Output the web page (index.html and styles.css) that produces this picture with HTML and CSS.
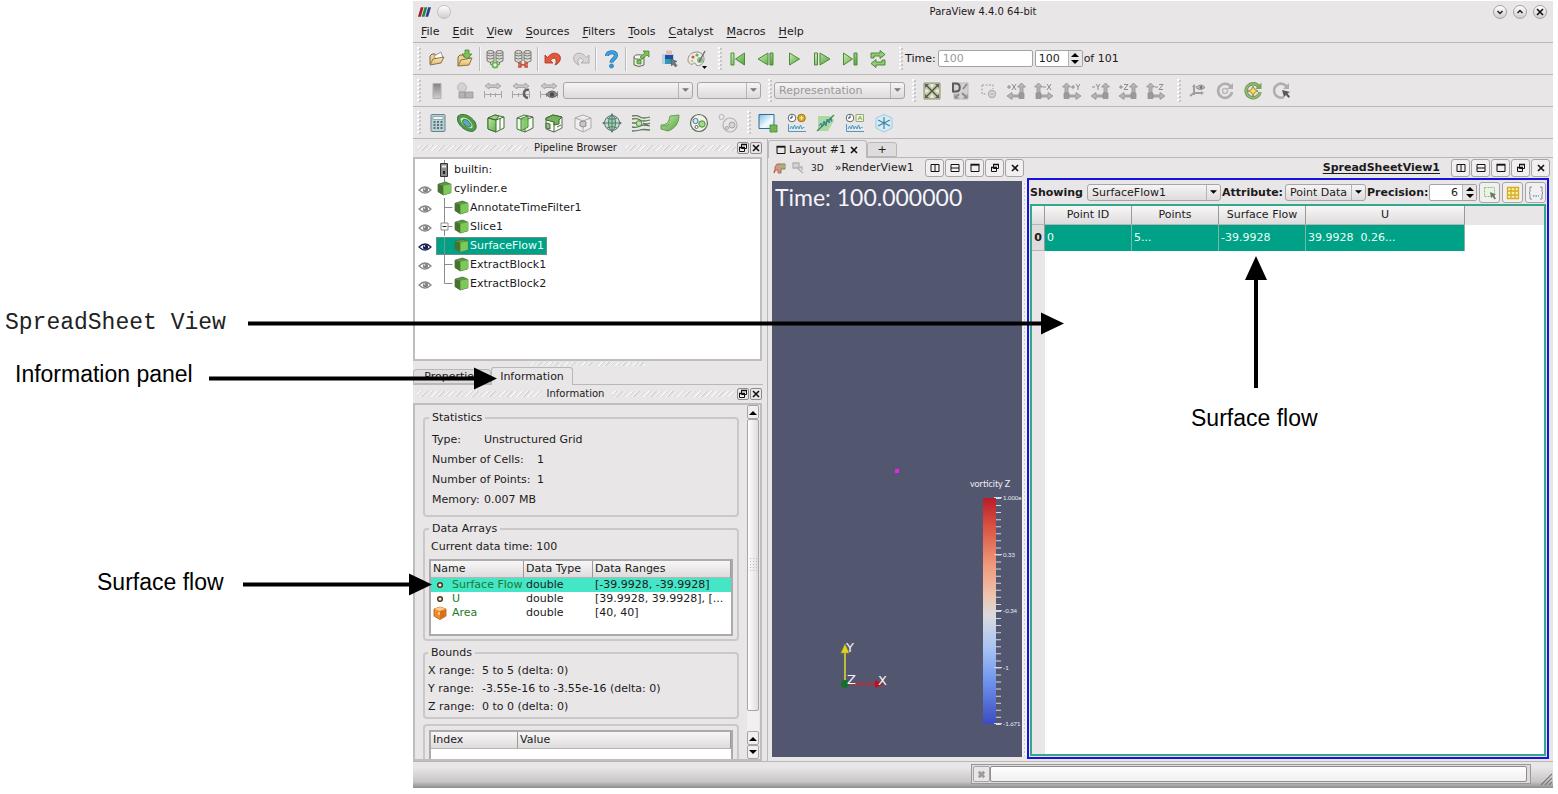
FILE: index.html
```html
<!DOCTYPE html>
<html lang="en">
<head>
<meta charset="utf-8">
<title>ParaView 4.4.0 64-bit</title>
<link rel="stylesheet" href="styles.css">
</head>
<body>
<svg class="defs" width="0" height="0" aria-hidden="true">
<defs>
<linearGradient id="gGreen" x1="0" y1="0" x2="1" y2="1"><stop offset="0" stop-color="#cdeeb4"/><stop offset="1" stop-color="#4fa53a"/></linearGradient>
<linearGradient id="gFold" x1="0" y1="0" x2="0" y2="1"><stop offset="0" stop-color="#fbe9bd"/><stop offset="1" stop-color="#e4b864"/></linearGradient>
<linearGradient id="gGray" x1="0" y1="0" x2="0" y2="1"><stop offset="0" stop-color="#858384"/><stop offset="1" stop-color="#cfcdce"/></linearGradient>
<linearGradient id="gBlue" x1="0" y1="0" x2="1" y2="1"><stop offset="0" stop-color="#7fc0e6"/><stop offset=".6" stop-color="#f2fafe"/><stop offset="1" stop-color="#b6dcf0"/></linearGradient>
<linearGradient id="gBar" x1="0" y1="0" x2="0" y2="1"><stop offset="0" stop-color="#b81c2c"/><stop offset=".12" stop-color="#d8503f"/><stop offset=".3" stop-color="#f09a7c"/><stop offset=".43" stop-color="#efc3ac"/><stop offset=".52" stop-color="#dadadd"/><stop offset=".66" stop-color="#a9c5f3"/><stop offset=".8" stop-color="#7397ee"/><stop offset="1" stop-color="#3b4cc0"/></linearGradient>
</defs>
<symbol id="open" viewBox="0 0 20 20"><path d="M3 15 3 7 5 5h3l1 2h6v3" fill="#efcf8c" stroke="#7d6a45"/><path d="M7 7l7-4 2 6-6 2z" fill="#fff" stroke="#999"/><path d="M3 16 6 10l11-2-3 6z" fill="url(#gFold)" stroke="#8a7347"/></symbol>
<symbol id="recent" viewBox="0 0 20 20"><path d="M3 17V8l2-2h3l1 2h6v3" fill="#efcf8c" stroke="#7d6a45"/><path d="M3 17 6 11l11-2-3 7z" fill="url(#gFold)" stroke="#8a7347"/><path d="M10 1h4v4h3l-5 5-5-5h3z" fill="#7cc258" stroke="#4c8235" stroke-width=".8"/></symbol>
<symbol id="servers" viewBox="0 0 20 20"><g fill="#d9dad3" stroke="#70716b" stroke-width=".9"><path d="M2 3v9q3 3 7 0V3zM11 3v9q3 3 7 0V3z"/><ellipse cx="5.500" cy="3" rx="3.500" ry="1.500"/><ellipse cx="14.500" cy="3" rx="3.500" ry="1.500"/><path d="M2 6q3 2 7 0M11 6q3 2 7 0M2 9q3 2 7 0M11 9q3 2 7 0" fill="none"/><path d="M5.500 13v2.500h9V13" fill="none"/></g></symbol>
<symbol id="connect" viewBox="0 0 20 20"><use href="#servers"/><circle cx="10" cy="16" r="2.600" fill="#e7f7de" stroke="#69b548" stroke-width="1.800"/></symbol>
<symbol id="disconnect" viewBox="0 0 20 20"><use href="#servers"/><path d="M5 14h3v4H5M15 14h-3v4h3M8 16h4" fill="#e5705c" stroke="#c05444" stroke-width="1.400"/></symbol>
<symbol id="undo" viewBox="0 0 20 20"><path d="M2 6v8h8L7.500 11.500C10 8 14 8 13 14l-1 2c6-2 7-9 3-11-4-2-8 0-10.500 3.500z" fill="#e5573a" stroke="#a3311c" stroke-width=".8"/></symbol>
<symbol id="redo" viewBox="0 0 20 20"><path d="M18 6v8h-8l2.500-2.500C10 8 6 8 7 14l1 2C2 14 1 7 5 5c4-2 8 0 10.500 3.500z" fill="#d6d4d5" stroke="#aaa8a9" stroke-width=".9"/></symbol>
<symbol id="help" viewBox="0 0 20 20"><path d="M6 7c0-5 9-5 9-.5 0 3-4.500 3.500-4.500 7" fill="none" stroke="#1e6ea8" stroke-width="4"/><path d="M6 7c0-5 9-5 9-.5 0 3-4.500 3.500-4.500 7" fill="none" stroke="#3fa0e2" stroke-width="2.600"/><circle cx="10.500" cy="17" r="2.100" fill="#3597db" stroke="#1e6ea8" stroke-width=".6"/></symbol>
<symbol id="export" viewBox="0 0 20 20"><path d="M3 8v8q5 3 10 0V8z" fill="#dfeed6" stroke="#5c6d55"/><ellipse cx="8" cy="8" rx="5" ry="2.200" fill="#f5faf2" stroke="#5c6d55"/><path d="M6 11v3.500l4 .5v-4z" fill="#7cc258" stroke="#4c8235" stroke-width=".7"/><path d="M9 8l5-4-2-2h6v6l-2-2-5 4z" fill="#7cc258" stroke="#3f7a29" stroke-width=".7"/></symbol>
<symbol id="cursorbox" viewBox="0 0 20 20"><path d="M7 1.500h6V6H7z" fill="#e7b9b0"/><path d="M3 5h12v10H3z" fill="#b9cfe4"/><path d="M6 6h8v4H6z" fill="#1f4f9c"/><path d="M6 10h8v5H6z" fill="#2f9ab0"/><path d="M12 10l6 2.500-2.500 1 2.500 3-1.500 1.500-2.500-3-1.500 2z" fill="#70787f" stroke="#4b5257" stroke-width=".6"/></symbol>
<symbol id="palette" viewBox="0 0 20 20"><path d="M10 3c-6 0-9 4-9 8 0 3 3 5 5 4 1-2 3-1 3 1 3 2 8-1 8-6 0-4-3-7-7-7z" fill="#eceeea" stroke="#8b908a"/><circle cx="6" cy="8" r="1.600" fill="#d9534a"/><circle cx="10" cy="6" r="1.600" fill="#6bb04a"/><circle cx="5" cy="12" r="1.300" fill="#e6bd4e"/><circle cx="13" cy="11" r="3" fill="#8bb98d"/><path d="M18 2l-6 11" stroke="#7a6e5f" stroke-width="1.500"/><path d="M15 17h5l-2.500 3z" fill="#000"/></symbol>
<symbol id="first" viewBox="0 0 20 20"><g fill="url(#gGreen)" stroke="#4f8a3c"><path d="M3 4h3v12H3zM16.500 4v12L7.500 10z"/></g></symbol>
<symbol id="prev" viewBox="0 0 20 20"><g fill="url(#gGreen)" stroke="#4f8a3c"><path d="M14 4h3v12h-3zM12 4v12L2 10z"/></g></symbol>
<symbol id="play" viewBox="0 0 20 20"><path d="M5.500 4v12l10-6z" fill="url(#gGreen)" stroke="#4f8a3c"/></symbol>
<symbol id="next" viewBox="0 0 20 20"><g fill="url(#gGreen)" stroke="#4f8a3c"><path d="M2.500 4h3v12h-3zM8 4v12l10-6z"/></g></symbol>
<symbol id="last" viewBox="0 0 20 20"><g fill="url(#gGreen)" stroke="#4f8a3c"><path d="M14 4h3v12h-3zM3.500 4v12l9-6z"/></g></symbol>
<symbol id="loop" viewBox="0 0 20 20"><g fill="#8ad06c" stroke="#4f7a40" stroke-width=".9"><path d="M3 9V4h9V1.500l5 4L12 9.500V7H6v2zM17 11v5H8v2.500l-5-4 5-4V13h6v-2z"/></g></symbol>
<symbol id="legendbar" viewBox="0 0 20 20"><path d="M6 2.500h8v15H6z" fill="url(#gGray)" stroke="#b3b1b2"/></symbol>
<symbol id="editcolor" viewBox="0 0 20 20"><circle cx="7" cy="6.500" r="4.500" fill="#d3d1d2" stroke="#b9b7b8"/><path d="M4 11h6v6H4zM10 11h8v6h-8z" fill="#b5b3b4" stroke="#9a9899" stroke-width=".8"/></symbol>
<symbol id="rescale" viewBox="0 0 20 20"><g fill="none" stroke="#a8a6a7"><path d="M1 13.500h18M1.500 10v7M18.500 10v7M7.500 12v4M12.500 12v4"/><path d="M2 5l4-3v2h8V2l4 3-4 3V6.500H6V8z" fill="#cbc9ca"/></g></symbol>
<symbol id="rescalec" viewBox="0 0 20 20"><use href="#rescale"/><path d="M18 9c-6-2-7 7-1 8" fill="none" stroke="#636162" stroke-width="2.600"/></symbol>
<symbol id="rescalev" viewBox="0 0 20 20"><use href="#rescale"/><path d="M7 13.500q6-7 12 0-6 6-12 0z" fill="#8d8b8c" stroke="#636162"/><circle cx="13" cy="13.500" r="2.200" fill="#4e4c4d"/></symbol>
<symbol id="zoomall" viewBox="0 0 20 20"><path d="M2 2h16v16H2z" fill="#c3caae" stroke="#8d9078"/><path d="M4 4l12 12M16 4L4 16" stroke="#4c523c" stroke-width="1.400"/><path d="M3 3h4L3 7zM17 3v4l-4-4zM3 17v-4l4 4zM17 17h-4l4-4z" fill="#5c634a"/><path d="M8 3.500l2 3.500 2-3.500zM8 16.500L10 13l2 3.500zM3.500 8L7 10l-3.500 2zM16.500 8L13 10l3.500 2z" fill="#f2f5e6"/></symbol>
<symbol id="zoomdata" viewBox="0 0 20 20"><path d="M4 2h14v16H4z" fill="#d3d1d2" stroke="#bbb9ba"/><path d="M5 17l4-4M17 17l-5-5M17 3l-4 5" stroke="#8b898a" stroke-width="1.800"/><path d="M5 13v4h4M17 13v4h-4" fill="none" stroke="#8b898a"/><path d="M3 2.500v8h3c5 0 5-8 0-8z" fill="#d6d4d5" stroke="#5d5b5c" stroke-width="2"/></symbol>
<symbol id="zoombox" viewBox="0 0 20 20"><path d="M4 4h11v4M4 4v9h5" fill="none" stroke="#b5b3b4" stroke-width="1.400" stroke-dasharray="2 1.500"/><circle cx="14" cy="13" r="3.500" fill="#d9d7d8" stroke="#b5b3b4" stroke-width="1.400"/><path d="M12.500 13h3" stroke="#a5a3a4"/></symbol>
<symbol id="axL" viewBox="0 0 20 20"><g fill="#b6b4b5" stroke="#929091" stroke-width=".8"><path d="M14 12V6h-2.500L15.500 2l4 4H17v6z"/><path d="M13 12h5v5.500h-5z" fill="#9c9a9b"/><path d="M13 14H6v-2.500L1 15l5 3.500V16h7z"/></g></symbol>
<symbol id="axR" viewBox="0 0 20 20"><g fill="#b6b4b5" stroke="#929091" stroke-width=".8"><path d="M3 12V6H.5L4.500 2l4 4H6v6z"/><path d="M2 12h5v5.500H2z" fill="#9c9a9b"/><path d="M7 14h7v-2.500l5 3.500-5 3.500V16H7z"/></g></symbol>
<symbol id="sgX" viewBox="0 0 6 6"><path d="M1 0l4 6M5 0L1 6" stroke="#8d8b8c"/></symbol>
<symbol id="sgY" viewBox="0 0 6 6"><path d="M1 0l2 3 2-3M3 3v3" stroke="#8d8b8c" fill="none"/></symbol>
<symbol id="sgZ" viewBox="0 0 6 6"><path d="M1 .5h4L1 5.500h4" stroke="#8d8b8c" fill="none"/></symbol>
<symbol id="px" viewBox="0 0 20 20"><use href="#axL"/><use href="#sgX" x="5" y="3" width="6" height="6"/><path d="M1 6h4M3 4v4" stroke="#8d8b8c"/></symbol>
<symbol id="mx" viewBox="0 0 20 20"><use href="#axR"/><use href="#sgX" x="12" y="3" width="6" height="6"/><path d="M9 6h3" stroke="#8d8b8c"/></symbol>
<symbol id="py" viewBox="0 0 20 20"><use href="#axR"/><use href="#sgY" x="13" y="3" width="6" height="6"/><path d="M9 6h4M11 4v4" stroke="#8d8b8c"/></symbol>
<symbol id="my" viewBox="0 0 20 20"><use href="#axL"/><use href="#sgY" x="5" y="3" width="6" height="6"/><path d="M2 6h3" stroke="#8d8b8c"/></symbol>
<symbol id="pz" viewBox="0 0 20 20"><use href="#axL"/><use href="#sgZ" x="5" y="3" width="6" height="6"/><path d="M1 6h4M3 4v4" stroke="#8d8b8c"/></symbol>
<symbol id="mz" viewBox="0 0 20 20"><use href="#axR"/><use href="#sgZ" x="12" y="3" width="6" height="6"/><path d="M9 6h3" stroke="#8d8b8c"/></symbol>
<symbol id="showaxes" viewBox="0 0 20 20"><path d="M7 14V5M7 12h8M7 12l-4 3" stroke="#a09e9f" stroke-width="2" fill="none"/><path d="M7 3l-2 3h4zM17 12l-3-2v4z" fill="#a09e9f"/><path d="M9 6.500q5-5 9 0-5 4-9 0z" fill="#c3c1c2" stroke="#8d8b8c"/><circle cx="14" cy="6.500" r="1.400" fill="#777"/></symbol>
<symbol id="center" viewBox="0 0 20 20"><path d="M16 6a7 7 0 1 0 1 5" fill="none" stroke="#b0aeaf" stroke-width="2.600"/><path d="M18 2v6h-6z" fill="#b0aeaf"/><circle cx="10" cy="10" r="2.500" fill="none" stroke="#bbb9ba" stroke-width="1.500"/></symbol>
<symbol id="resetcenter" viewBox="0 0 20 20"><path d="M16 6a7 7 0 1 0 1 5" fill="none" stroke="#6e9656" stroke-width="3.400"/><path d="M16 6a7 7 0 1 0 1 5" fill="none" stroke="#95ba76" stroke-width="1.600"/><path d="M18.500 1.500V8H12z" fill="#7da362"/><path d="M10 5l1.500 3.500L15 10l-3.500 1.500L10 15l-1.500-3.500L5 10l3.500-1.500z" fill="#f6e04e" stroke="#8a7433" stroke-width=".8"/></symbol>
<symbol id="pickcenter" viewBox="0 0 20 20"><path d="M16 6a7 7 0 1 0-3 10" fill="none" stroke="#b0aeaf" stroke-width="2.600"/><path d="M18 2v6h-6z" fill="#b0aeaf"/><path d="M11 9l8 2-2.500 1.500 2.500 3-1.500 1.500-2.500-3-2 2z" fill="#595758"/></symbol>
<symbol id="calc" viewBox="0 0 20 20"><rect x="3" y="1.500" width="14" height="17" rx="1" fill="#bcd0d3" stroke="#66858c"/><path d="M5 3.500h10v3H5z" fill="#eef7f7" stroke="#66858c" stroke-width=".6"/><path d="M5.500 9h9M5.500 12h9M5.500 15h9" stroke="#55757d" stroke-width="2" stroke-dasharray="2 1.500"/></symbol>
<symbol id="contour" viewBox="0 0 20 20"><path d="M1 3c5-4 13 0 17 6 3 6 0 11-6 9C6 17-2 9 1 3z" fill="#4d9b4c" stroke="#3f7042"/><path d="M4 5c4-2 9 2 11 6 2 5-1 5-5 3-4-2-8-7-6-9z" fill="#c6e6a5"/><path d="M6 7c3-2 7 2 8 5 0 3-4 2-6 0S5 9 6 7z" fill="#5fa7c0" stroke="#35764c"/></symbol>
<symbol id="clip" viewBox="0 0 20 20"><path d="M2 5l7-3 9 2v11l-8 4-8-3z" fill="#fafff6" stroke="#3f6f36"/><path d="M2 5l8 2v12l-8-3zM2 5l7-3 4 1-3 4z" fill="url(#gGreen)" stroke="#3f6f36"/><path d="M10 7l8-3M14 5.500v11" fill="none" stroke="#3f6f36"/></symbol>
<symbol id="slice" viewBox="0 0 20 20"><path d="M2 5l7-3 9 2v11l-8 4-8-3z" fill="#f1f9ec" stroke="#4b6a45"/><path d="M2 5l8 2v12M10 7l8-3" fill="none" stroke="#4b6a45"/><path d="M6 5.500l7-2.500v11l-7 4z" fill="#7fc765" fill-opacity=".85" stroke="#3f8c2d"/></symbol>
<symbol id="threshold" viewBox="0 0 20 20"><path d="M2 5l7-3 9 2v11l-8 4-8-3z" fill="#f7faf5" stroke="#5a6a56"/><path d="M2 5l7-3 9 2-3 3v4l-5 1v-3l-8-2z" fill="#74b45d" stroke="#41692f"/><path d="M2 10l4 1v5l-4-1zM10 9v10M13 14l4-2" fill="#8bc576" stroke="#4b6a45"/></symbol>
<symbol id="extract" viewBox="0 0 20 20"><path d="M2 5l8-3 8 3v10l-8 4-8-4zM2 5l8 3 8-3M10 8v11" fill="#f0eeef" stroke="#aaa8a9"/><path d="M7 9l4-1 2 1v4l-3 1-3-1z" fill="#c8c6c7" stroke="#8f8d8e"/></symbol>
<symbol id="glyph" viewBox="0 0 20 20"><circle cx="10" cy="10" r="7.500" fill="#c9d9d3" stroke="#547a78"/><ellipse cx="10" cy="10" rx="3.500" ry="7.500" fill="#9ed39b" stroke="#547a78"/><path d="M10 1v18M1 10h18M5 5q5 3 10 0M5 15q5-3 10 0" fill="none" stroke="#547a78"/><path d="M10 0L8.500 2.500h3zM10 20l-1.500-2.500h3zM0 10l2.500-1.500v3zM20 10l-2.500-1.500v3z" fill="#547a78"/></symbol>
<symbol id="stream" viewBox="0 0 20 20"><g fill="none" stroke="#5b7a58" stroke-width="1.300"><path d="M1 3q5-1 8 1t10 0M1 6q5-1 8 1t10 0M1 14q5 1 8-1t10 0M1 18q5 0 8-1t10 0M1 10h5M12 10q4 2 7 0"/></g><circle cx="8" cy="10.500" r="2.800" fill="#b8e49c" stroke="#4f8a3c"/></symbol>
<symbol id="warp" viewBox="0 0 20 20"><path d="M1 12c6 0 8-3 9-9l9-1c0 9-5 14-11 16l-7-2z" fill="url(#gGreen)" stroke="#5f9150" stroke-width=".9"/><path d="M1 13q7 1 8-2" fill="none" stroke="#6fa45b"/></symbol>
<symbol id="group" viewBox="0 0 20 20"><circle cx="10" cy="10" r="8.500" fill="#eef4ea" stroke="#5d6b59" stroke-width="1.200"/><circle cx="6.500" cy="8" r="2.600" fill="#d3e6f2" stroke="#4b7590"/><circle cx="13" cy="11" r="3.200" fill="#a2da86" stroke="#4f8a3c"/><circle cx="7.500" cy="14" r="1.500" fill="#fff" stroke="#5d6b59"/></symbol>
<symbol id="level" viewBox="0 0 20 20"><circle cx="12" cy="12" r="7" fill="none" stroke="#b3b1b2" stroke-width="1.200"/><circle cx="3.500" cy="4" r="2.500" fill="none" stroke="#b3b1b2"/><circle cx="14" cy="12" r="3" fill="#d5d3d4" stroke="#a5a3a4"/><circle cx="9" cy="15" r="1.500" fill="none" stroke="#a5a3a4"/></symbol>
<symbol id="selregion" viewBox="0 0 20 20"><path d="M1 1.500h15v14H1z" fill="url(#gBlue)" stroke="#2b6d94"/><path d="M12 12h7v7h-7z" fill="#6eb854" stroke="#4a8837" stroke-width=".8"/></symbol>
<symbol id="wave" viewBox="0 0 20 20"><path d="M1.500 11v7.500H19M3 16l1.500-3 1.500 3 1.500-4L9 16l1.500-3 1.500 3 1.500-4 1.500 4 1.500-2 1 1" fill="none" stroke="#4c9ac4"/></symbol>
<symbol id="plottime" viewBox="0 0 20 20"><use href="#wave"/><circle cx="5" cy="5" r="3.800" fill="#fff" stroke="#5b686c"/><path d="M5 2.500V5H3" stroke="#333" fill="none"/><circle cx="14.500" cy="5" r="3.800" fill="#dca92d" stroke="#9a741b"/><path d="M12.500 5h4M14.500 3v4" stroke="#fae9a5"/></symbol>
<symbol id="plotline" viewBox="0 0 20 20"><path d="M2 3h12l4 4-6 11H2z" fill="#a9dba0"/><path d="M1 18L18 2" stroke="#548a52" stroke-width="1.500"/><path d="M3 13l2-3 1 4 2-6 2 5 1-7 2 4 2-5 1 4" fill="none" stroke="#35819b"/></symbol>
<symbol id="plotsel" viewBox="0 0 20 20"><use href="#wave"/><circle cx="5" cy="5" r="3.800" fill="#fff" stroke="#5b686c"/><path d="M5 2.500V5H3" stroke="#333" fill="none"/><path d="M11 1.500h7.500v7H11z" fill="#eaf4d8" stroke="#9aa87e"/><path d="M13 7l2-4 2 4M14 5.500h2" stroke="#8db65d" fill="none"/></symbol>
<symbol id="freeze" viewBox="0 0 20 20"><path d="M2 5l8-3.500L18 5v10l-8 4-8-4z" fill="#d5ebf7" stroke="#9bcbe4"/><path d="M10 4v12M4 7l12 6M16 7L4 13" stroke="#47829b" stroke-width="1.200"/></symbol>
<symbol id="cube" viewBox="0 0 14 14"><path d="M1 3l7-2 5 2v8l-7 2-5-3z" fill="#5a9a42" stroke="#4b6b41" stroke-width=".8"/><path d="M1 3l5 1.500V13l-5-3z" fill="#48722f"/><path d="M6 4.500L13 3v8l-7 2z" fill="#7cc95a"/></symbol>
<symbol id="boxicon" viewBox="0 0 14 14"><path d="M1 3l6-2 6 2v7l-6 3.500L1 10z" fill="#f08a28" stroke="#b35c12" stroke-width=".8"/><path d="M1 3l6 2 6-2-6-2z" fill="#ffc98a"/><path d="M7 5v8l5.500-3V3.500z" fill="#dd6f15"/><path d="M6 6v3" stroke="#fff"/></symbol>
<symbol id="eye" viewBox="0 0 14 10"><path d="M1 5q6-6 12 0-6 6-12 0z" fill="#fff" stroke="currentColor" stroke-width="1.200"/><circle cx="7.500" cy="5" r="2.600" fill="currentColor"/><circle cx="6.500" cy="4" r=".8" fill="#fff"/></symbol>
<symbol id="host" viewBox="0 0 8 14"><path d="M.5.500h7v13h-7z" fill="#8b8b8b" stroke="#333"/><path d="M2 2.500h4v2H2z" fill="#eee"/><path d="M4 8v3" stroke="#222" stroke-width="2"/></symbol>
<symbol id="dot" viewBox="0 0 14 14"><circle cx="7" cy="7" r="2.300" fill="#fbeee0" stroke="#4a3316" stroke-width="1.500"/></symbol>
<symbol id="spH" viewBox="0 0 10 10"><path d="M1 1.500h8v7H1zM5 1.500v7" fill="none" stroke="#111"/></symbol>
<symbol id="spV" viewBox="0 0 10 10"><path d="M1 1.500h8v7H1zM1 5h8" fill="none" stroke="#111"/></symbol>
<symbol id="max" viewBox="0 0 10 10"><path d="M1 2h8v6.500H1z" fill="none" stroke="#111"/><path d="M.5 1.500h9" stroke="#111" stroke-width="1.500"/></symbol>
<symbol id="restore" viewBox="0 0 10 10"><path d="M3.500 1.500h5v4h-5zM1.500 4.500h5v4h-5z" fill="#eee" stroke="#111"/><path d="M3 1.500h6M1 4.500h6" stroke="#111" stroke-width="1.500"/></symbol>
<symbol id="close" viewBox="0 0 10 10"><path d="M2 2l6 6M8 2L2 8" stroke="#111" stroke-width="1.600"/></symbol>
<symbol id="up" viewBox="0 0 8 5"><path d="M0 5l4-4 4 4z"/></symbol>
<symbol id="down" viewBox="0 0 8 5"><path d="M0 0l4 4 4-4z"/></symbol>
<symbol id="cam" viewBox="0 0 14 12"><path d="M4 2h8v5H8v4H5V8H2V5z" fill="#d99584" stroke="#a3705c"/><path d="M7 3h5v3H7z" fill="#8cc07b"/><path d="M2 8l-1 3" stroke="#d54f3c" stroke-width="1.500"/></symbol>
<symbol id="cam2" viewBox="0 0 14 12"><path d="M2 1h6v5H2zM5 5l7 6M8 5h3v3" fill="#d5d3d4" stroke="#b3b1b2" stroke-width="1.300"/></symbol>
<symbol id="selonly" viewBox="0 0 16 16"><path d="M2.500 2.500h10v9h-10z" fill="#eaf2e3" stroke="#8dbd72" stroke-dasharray="2 1"/><path d="M8 7l6 2.500-2 1 2 3-1.500 1-2-3-1.500 1.500z" fill="#687a60"/></symbol>
<symbol id="grid" viewBox="0 0 16 16"><path d="M2.500 2.500h11v11h-11zM2.500 6h11M2.500 10h11M6 2.500v11M10 2.500v11" fill="#fdf3b0" stroke="#d8ab22" stroke-width="1.300"/></symbol>
<symbol id="braces" viewBox="0 0 16 16"><path d="M4 2H2v5L1 8l1 1v5h2M12 2h2v5l1 1-1 1v5h-2" fill="none" stroke="#8b8f92"/><path d="M5 11h6" stroke="#5c9ccb" stroke-width="1.500" stroke-dasharray="1.500 1"/></symbol>
</svg>

<main class="figure">
  <aside class="notes">
    <p class="note note-mono">SpreadSheet View</p>
    <p class="note note-info">Information panel</p>
    <p class="note note-flow">Surface flow</p>
  </aside>

  <section class="app">
    <header class="titlebar">
      <svg class="logo" viewBox="0 0 14 10"><path d="M3 0h3L3 10H0z" fill="#a51c2c"/><path d="M7 0h3L7 10H4z" fill="#1f8a43"/><path d="M11 0h3l-3 10H8z" fill="#283f90"/></svg>
      <button class="round plain" aria-label="Window menu"></button>
      <h1 class="app-title">ParaView 4.4.0 64-bit</h1>
      <button class="round" aria-label="Minimize"><svg viewBox="0 0 10 10"><path d="M2.500 4L5 6.500 7.500 4" fill="none" stroke="#222" stroke-width="1.500"/></svg></button>
      <button class="round" aria-label="Maximize"><svg viewBox="0 0 10 10"><path d="M2.500 6L5 3.500 7.500 6" fill="none" stroke="#222" stroke-width="1.500"/></svg></button>
      <button class="round" aria-label="Close"><svg viewBox="0 0 10 10"><use href="#close"/></svg></button>
    </header>
    <nav class="menubar">
      <button><u>F</u>ile</button><button><u>E</u>dit</button><button><u>V</u>iew</button><button><u>S</u>ources</button><button><u>F</u>ilters</button><button><u>T</u>ools</button><button><u>C</u>atalyst</button><button><u>M</u>acros</button><button><u>H</u>elp</button>
    </nav>

    <div class="toolbar">
      <i class="handle first"></i>
      <button class="tool" aria-label="Open"><svg><use href="#open"/></svg></button>
      <button class="tool" aria-label="Load recent"><svg><use href="#recent"/></svg></button>
      <i class="sep"></i>
      <button class="tool" aria-label="Connect"><svg><use href="#connect"/></svg></button>
      <button class="tool" aria-label="Disconnect"><svg><use href="#disconnect"/></svg></button>
      <i class="sep"></i>
      <button class="tool" aria-label="Undo"><svg><use href="#undo"/></svg></button>
      <button class="tool" aria-label="Redo"><svg><use href="#redo"/></svg></button>
      <i class="sep"></i>
      <button class="tool" aria-label="Help"><svg><use href="#help"/></svg></button>
      <i class="sep"></i>
      <button class="tool" aria-label="Extract"><svg><use href="#export"/></svg></button>
      <button class="tool" aria-label="Color map"><svg><use href="#cursorbox"/></svg></button>
      <button class="tool" aria-label="Palette"><svg><use href="#palette"/></svg></button>
      <i class="handle"></i>
      <button class="tool" aria-label="First frame"><svg><use href="#first"/></svg></button>
      <button class="tool" aria-label="Previous frame"><svg><use href="#prev"/></svg></button>
      <button class="tool" aria-label="Play"><svg><use href="#play"/></svg></button>
      <button class="tool" aria-label="Next frame"><svg><use href="#next"/></svg></button>
      <button class="tool" aria-label="Last frame"><svg><use href="#last"/></svg></button>
      <button class="tool" aria-label="Loop"><svg><use href="#loop"/></svg></button>
      <i class="handle"></i>
      <label for="time">Time:</label>
      <input class="field" id="time" type="text" value="100" disabled>
      <span class="spin"><input id="frame" type="text" value="100" aria-label="Frame"><span class="steps"><button aria-label="Next"><svg><use href="#up"/></svg></button><button aria-label="Back"><svg><use href="#down"/></svg></button></span></span>
      <label class="of" for="frame">of 101</label>
    </div>

    <div class="toolbar">
      <i class="handle first"></i>
      <button class="tool" aria-label="Legend"><svg><use href="#legendbar"/></svg></button>
      <button class="tool" aria-label="Edit colors"><svg><use href="#editcolor"/></svg></button>
      <button class="tool" aria-label="Rescale"><svg><use href="#rescale"/></svg></button>
      <button class="tool" aria-label="Rescale custom"><svg><use href="#rescalec"/></svg></button>
      <button class="tool" aria-label="Rescale visible"><svg><use href="#rescalev"/></svg></button>
      <span class="combo c-array"><select aria-label="Array" disabled><option></option></select><svg><use href="#down"/></svg></span>
      <span class="combo c-comp"><select aria-label="Component" disabled><option></option></select><svg><use href="#down"/></svg></span>
      <i class="handle"></i>
      <span class="combo c-rep"><select aria-label="Representation" disabled><option>Representation</option></select><svg><use href="#down"/></svg></span>
      <i class="handle"></i>
      <button class="tool" aria-label="Reset camera"><svg><use href="#zoomall"/></svg></button>
      <button class="tool" aria-label="Zoom to data"><svg><use href="#zoomdata"/></svg></button>
      <button class="tool" aria-label="Zoom to box"><svg><use href="#zoombox"/></svg></button>
      <button class="tool" aria-label="+X"><svg><use href="#px"/></svg></button>
      <button class="tool" aria-label="-X"><svg><use href="#mx"/></svg></button>
      <button class="tool" aria-label="+Y"><svg><use href="#py"/></svg></button>
      <button class="tool" aria-label="-Y"><svg><use href="#my"/></svg></button>
      <button class="tool" aria-label="+Z"><svg><use href="#pz"/></svg></button>
      <button class="tool" aria-label="-Z"><svg><use href="#mz"/></svg></button>
      <i class="handle"></i>
      <button class="tool" aria-label="Show axes"><svg><use href="#showaxes"/></svg></button>
      <button class="tool" aria-label="Show center"><svg><use href="#center"/></svg></button>
      <button class="tool" aria-label="Reset center"><svg><use href="#resetcenter"/></svg></button>
      <button class="tool" aria-label="Pick center"><svg><use href="#pickcenter"/></svg></button>
    </div>

    <div class="toolbar wide">
      <i class="handle first"></i>
      <button class="tool" aria-label="Calculator"><svg><use href="#calc"/></svg></button>
      <button class="tool" aria-label="Contour"><svg><use href="#contour"/></svg></button>
      <button class="tool" aria-label="Clip"><svg><use href="#clip"/></svg></button>
      <button class="tool" aria-label="Slice"><svg><use href="#slice"/></svg></button>
      <button class="tool" aria-label="Threshold"><svg><use href="#threshold"/></svg></button>
      <button class="tool" aria-label="Extract subset"><svg><use href="#extract"/></svg></button>
      <button class="tool" aria-label="Glyph"><svg><use href="#glyph"/></svg></button>
      <button class="tool" aria-label="Stream tracer"><svg><use href="#stream"/></svg></button>
      <button class="tool" aria-label="Warp"><svg><use href="#warp"/></svg></button>
      <button class="tool" aria-label="Group datasets"><svg><use href="#group"/></svg></button>
      <button class="tool" aria-label="Extract level"><svg><use href="#level"/></svg></button>
      <i class="handle"></i>
      <button class="tool" aria-label="Extract selection"><svg><use href="#selregion"/></svg></button>
      <button class="tool" aria-label="Plot over time"><svg><use href="#plottime"/></svg></button>
      <button class="tool" aria-label="Plot over line"><svg><use href="#plotline"/></svg></button>
      <button class="tool" aria-label="Plot selection"><svg><use href="#plotsel"/></svg></button>
      <button class="tool" aria-label="Probe"><svg><use href="#freeze"/></svg></button>
    </div>

    <div class="work">
      <div class="docks">
        <div class="dock-title"><i class="hatch"></i><h2>Pipeline Browser</h2><i class="hatch"></i><button aria-label="Float"><svg><use href="#restore"/></svg></button><button aria-label="Close"><svg><use href="#close"/></svg></button></div>
        <ul class="tree">
          <li><span class="eye"></span><span class="node"><svg class="guide"><path d="M7.500 0v19"/><use href="#host" x="3" y="3" width="8" height="14"/></svg>builtin:</span></li>
          <li><button class="eye" aria-label="Toggle"><svg><use href="#eye"/></svg></button><span class="node"><svg class="guide"><path d="M7.500 0v4"/><use href="#cube" x="0" y="2" width="15" height="15"/></svg>cylinder.e</span></li>
          <li><button class="eye" aria-label="Toggle"><svg><use href="#eye"/></svg></button><span class="node"><svg class="guide"><path d="M7.500 0v19M7.500 9.500h8"/></svg><svg class="cube"><use href="#cube"/></svg>AnnotateTimeFilter1</span></li>
          <li><button class="eye" aria-label="Toggle"><svg><use href="#eye"/></svg></button><span class="node"><svg class="guide"><path d="M7.500 0v19M7.500 9.500h8"/><path d="M4 6h7v7H4z" fill="#fff"/><path d="M5.500 9.500h4" stroke="#222"/></svg><svg class="cube"><use href="#cube"/></svg>Slice1</span></li>
          <li><button class="eye on" aria-label="Toggle"><svg><use href="#eye"/></svg></button><span class="node picked"><svg class="guide"><path d="M7.500 0v19"/></svg><svg class="cube"><use href="#cube"/></svg>SurfaceFlow1</span></li>
          <li><button class="eye" aria-label="Toggle"><svg><use href="#eye"/></svg></button><span class="node"><svg class="guide"><path d="M7.500 0v19M7.500 9.500h8"/></svg><svg class="cube"><use href="#cube"/></svg>ExtractBlock1</span></li>
          <li><button class="eye" aria-label="Toggle"><svg><use href="#eye"/></svg></button><span class="node"><svg class="guide"><path d="M7.500 0v9.500h8"/></svg><svg class="cube"><use href="#cube"/></svg>ExtractBlock2</span></li>
        </ul>
        <div class="splitter"><i class="hatch"></i></div>
        <div class="tabs"><button class="tab">Properties</button><button class="tab current">Information</button></div>
        <div class="dock-title"><i class="hatch"></i><h2>Information</h2><i class="hatch"></i><button aria-label="Float"><svg><use href="#restore"/></svg></button><button aria-label="Close"><svg><use href="#close"/></svg></button></div>
        <div class="scroll">
          <div class="info">
            <fieldset class="stats"><legend>Statistics</legend>
              <p><span class="short">Type:</span>Unstructured Grid</p>
              <p><span class="long">Number of Cells:</span>1</p>
              <p><span class="long">Number of Points:</span>1</p>
              <p><span class="short">Memory:</span>0.007 MB</p>
            </fieldset>
            <fieldset class="arrays"><legend>Data Arrays</legend>
              <p>Current data time: 100</p>
              <div class="list">
                <table>
                  <colgroup><col class="k-name"><col class="k-type"><col></colgroup>
                  <thead><tr><th>Name</th><th>Data Type</th><th>Data Ranges</th></tr></thead>
                  <tbody>
                    <tr class="hit"><td class="key"><svg><use href="#dot"/></svg>Surface Flow</td><td>double</td><td>[-39.9928, -39.9928]</td></tr>
                    <tr><td class="key"><svg><use href="#dot"/></svg>U</td><td>double</td><td>[39.9928, 39.9928], [...</td></tr>
                    <tr><td class="key"><svg><use href="#boxicon"/></svg>Area</td><td>double</td><td>[40, 40]</td></tr>
                  </tbody>
                </table>
              </div>
            </fieldset>
            <fieldset class="bounds"><legend>Bounds</legend>
              <p><span>X range:</span>5 to 5 (delta: 0)</p>
              <p><span>Y range:</span>-3.55e-16 to -3.55e-16 (delta: 0)</p>
              <p><span>Z range:</span>0 to 0 (delta: 0)</p>
            </fieldset>
            <fieldset class="index">
              <div class="list">
                <table><colgroup><col class="k-index"><col></colgroup><thead><tr><th>Index</th><th>Value</th></tr></thead></table>
              </div>
            </fieldset>
          </div>
          <div class="bar">
            <button aria-label="Scroll up"><svg><use href="#up"/></svg></button>
            <div class="thumb"><i></i></div>
            <div class="trough"></div>
            <button aria-label="Scroll up"><svg><use href="#up"/></svg></button>
            <button aria-label="Scroll down"><svg><use href="#down"/></svg></button>
          </div>
        </div>
      </div>
      <i class="vsplit"></i>

      <div class="views">
        <div class="view-tabs">
          <button class="vtab current"><svg><use href="#max"/></svg>Layout #1<svg><use href="#close"/></svg></button>
          <button class="vtab add" aria-label="New layout">+</button>
        </div>
        <div class="split">
          <section class="render">
            <div class="view-head">
              <svg class="cam"><use href="#cam"/></svg><svg class="cam"><use href="#cam2"/></svg><span class="mode">3D</span><span class="vname">»RenderView1</span>
              <span class="btns"><button aria-label="Split horizontal"><svg><use href="#spH"/></svg></button><button aria-label="Split vertical"><svg><use href="#spV"/></svg></button><button aria-label="Maximize"><svg><use href="#max"/></svg></button><button aria-label="Restore"><svg><use href="#restore"/></svg></button><button aria-label="Close"><svg><use href="#close"/></svg></button></span>
            </div>
            <div class="scene">
              <p class="clock">Time: 100.000000</p>
              <i class="point"></i>
              <svg class="axes" viewBox="0 0 56 56"><path d="M10 45V12" stroke="#e5dc2c" stroke-width="1.500"/><path d="M10 5l-4 9h8z" fill="#dfd51d" stroke="#a39b18" stroke-width=".6"/><path d="M10 45h32" stroke="#d81f2c" stroke-width="1.500"/><path d="M49 45l-9-4v8z" fill="#c20f1c"/><circle cx="10" cy="45" r="4" fill="#14702b"/><g fill="#f4f4f8" class="axis-label"><text x="11" y="13">Y</text><text x="12" y="45">Z</text><text x="43" y="46">X</text></g></svg>
              <svg class="legend" viewBox="0 0 56 252"><text x="4" y="11" class="lt">vorticity Z</text><rect x="17" y="22" width="13" height="226" fill="url(#gBar)"/><path d="M32.500 22v227" stroke="#d6d8e6" stroke-width="5" stroke-dasharray="1 6.060"/><path d="M28 21.500h8M28 78.500h8M28 134.500h8M28 191.500h8M28 247.500h8" stroke="#d6d8e6"/><text x="37" y="24">1.000e</text><text x="37" y="81">0.33</text><text x="37" y="137">-0.34</text><text x="37" y="194">-1</text><text x="37" y="250">-1.671</text></svg>
            </div>
          </section>
          <i class="vsplit thin"></i>
          <section class="sheet">
            <div class="view-head right">
              <span class="vname strong">SpreadSheetView1</span>
              <span class="btns"><button aria-label="Split horizontal"><svg><use href="#spH"/></svg></button><button aria-label="Split vertical"><svg><use href="#spV"/></svg></button><button aria-label="Maximize"><svg><use href="#max"/></svg></button><button aria-label="Restore"><svg><use href="#restore"/></svg></button><button aria-label="Close"><svg><use href="#close"/></svg></button></span>
            </div>
            <div class="active">
              <div class="sheet-bar">
                <label for="showing">Showing</label>
                <span class="combo c-show"><select id="showing"><option>SurfaceFlow1</option></select><svg><use href="#down"/></svg></span>
                <label for="attr">Attribute:</label>
                <span class="combo c-attr"><select id="attr"><option>Point Data</option></select><svg><use href="#down"/></svg></span>
                <label for="prec">Precision:</label>
                <span class="spin s-prec"><input id="prec" type="text" value="6"><span class="steps"><button aria-label="More"><svg><use href="#up"/></svg></button><button aria-label="Less"><svg><use href="#down"/></svg></button></span></span>
                <button class="sq" aria-label="Selected only"><svg><use href="#selonly"/></svg></button>
                <button class="sq" aria-label="Columns"><svg><use href="#grid"/></svg></button>
                <button class="sq" aria-label="Cell connectivity"><svg><use href="#braces"/></svg></button>
              </div>
              <div class="grid-frame">
                <table class="grid">
                  <colgroup><col class="g-row"><col class="g-a"><col class="g-a"><col class="g-a"><col class="g-u"><col></colgroup>
                  <thead><tr><th></th><th>Point ID</th><th>Points</th><th>Surface Flow</th><th>U</th><td></td></tr></thead>
                  <tbody><tr><th>0</th><td>0</td><td>5...</td><td>-39.9928</td><td>39.9928&nbsp; 0.26...</td></tr></tbody>
                </table>
                <div class="gutter"></div>
              </div>
            </div>
          </section>
        </div>
      </div>
    </div>

    <footer class="status">
      <div class="progress"><button aria-label="Abort"><svg viewBox="0 0 10 10"><path d="M2 2l6 6M8 2L2 8" stroke="#9b999a" stroke-width="3"/></svg></button><div class="meter"></div></div>
      <svg class="grip" viewBox="0 0 12 12"><path d="M1 12L12 1M5 12l7-7M9 12l3-3" stroke="#777" stroke-width="1.200"/></svg>
    </footer>
  </section>

  <svg class="arrows" width="1300" height="600" aria-hidden="true">
    <path d="M248 323.500h796M209 378.500h268M243 584.500h168M1256 388V278" stroke="#000" stroke-width="4" fill="none"/>
    <path d="M1041 312.500l23 11-23 11zM474 367.500l23 11-23 11zM409 573.500l23 11-23 11zM1245 280l11-24 11 24z"/>
  </svg>
  <p class="note callout">Surface flow</p>
</main>
</body>
</html>
```
FILE: styles.css
```css
* { box-sizing: border-box; }
body { margin: 0; background: #fff; color: #1c1a1b; font: 11px/14px "DejaVu Sans", sans-serif; }
h1, h2, p, ul { margin: 0; padding: 0; font-size: inherit; font-weight: normal; }
ul { list-style: none; }
button, input, select { font: inherit; color: inherit; margin: 0; padding: 0; border: 0; background: none; border-radius: 0; }
svg { display: block; }
i { display: block; }
.defs { position: absolute; }

.figure { position: relative; display: flex; height: 100vh; min-height: 640px; padding: 1px 5px 6px 0; }
.notes { flex: 0 0 413px; padding-top: 308px; }
.note { font: 23px/28px "Liberation Sans", Arial, sans-serif; color: #000; }
.note-mono { padding-left: 5px; font-family: "Liberation Mono", monospace; color: #222; }
.note-info { padding: 23px 0 0 15px; }
.note-flow { padding: 180px 0 0 97px; }
.callout { position: absolute; left: 1191px; top: 404px; }
.arrows { position: absolute; left: 0; top: 0; pointer-events: none; }

.app { flex: 1; min-width: 0; display: flex; flex-direction: column; background: #e9e6e7; }

.titlebar { flex: none; display: flex; align-items: center; gap: 6px; height: 21px; padding: 0 6px 0 5px; }
.logo { width: 13px; height: 10px; }
.app-title { flex: 1; text-align: center; font-size: 10px; padding-left: 22px; }
.round { width: 14px; height: 14px; padding: 1px; border: 1px solid #a3a1a2; border-radius: 50%; background: linear-gradient(#fff, #cfcdce); }
.round.plain { border-color: #c3c1c2; margin-right: auto; }
.round svg { width: 10px; height: 10px; }

.menubar { flex: none; display: flex; gap: 13px; height: 21px; padding: 0 8px; border-bottom: 1px solid #bab7b8; }
.menubar u { text-underline-offset: 2px; }

.toolbar { flex: none; display: flex; align-items: center; height: 32px; padding-left: 3px; border-bottom: 1px solid #bab7b8; }
.tool { flex: none; display: grid; place-items: center; width: 28px; height: 28px; }
.wide .tool { width: 29px; }
.tool svg { width: 20px; height: 20px; }
.sep { width: 2px; height: 24px; background: linear-gradient(90deg, #bdbabb 50%, #f8f7f7 50%); }
.handle { flex: none; width: 7px; height: 25px; margin: 0 0 0 6px;
  background: radial-gradient(circle at 2px 2px, #fff 1px, transparent 1px) 0 0 / 7px 4px, radial-gradient(circle at 4px 3px, #c9c6c7 1px, transparent 1px) 0 0 / 7px 4px; }
.handle.first { margin: 0; }
.wide .handle { margin: 0 0 0 4px; }
.wide .handle.first { margin: 0; }
.field { width: 95px; height: 17px; margin-left: 2px; padding: 0 4px; border: 1px solid #a5a2a3; border-radius: 2px; background: #fff; color: #9a9899; }
.spin { display: flex; width: 48px; height: 17px; margin-left: 2px; border: 1px solid #a5a2a3; border-radius: 2px; background: #fff; }
.spin input { flex: 1; min-width: 0; padding-left: 3px; }
.steps { display: flex; flex-direction: column; width: 14px; background: #e9e6e7; border-left: 1px solid #b7b4b5; }
.steps button { flex: 1; display: grid; place-items: center; }
.steps svg { width: 8px; height: 5px; }
.of { margin-left: 1px; }

.combo { position: relative; height: 17px; border: 1px solid #a8a5a6; border-radius: 3px; background: linear-gradient(#f6f4f5, #dedbdc); }
.combo select { appearance: none; width: 100%; height: 100%; padding: 0 18px 0 4px; opacity: 1; }
.combo select:disabled { color: #9a9899; }
.combo svg { position: absolute; right: 0; top: 0; width: 14px; height: 15px; padding: 5px 3px; border-left: 1px solid #b7b4b5; pointer-events: none; }
.c-array { width: 130px; fill: #777; }
.c-comp { width: 64px; margin-left: 4px; fill: #777; }
.c-rep { width: 131px; fill: #777; }

.work { flex: 1; min-height: 0; display: flex; }
.docks { flex: 0 0 350px; display: flex; flex-direction: column; min-height: 0; }
.dock-title { flex: none; display: flex; align-items: center; height: 18px; padding: 0 1px 0 4px; }
.dock-title h2 { padding: 0 8px 0 6px; font-size: 10px; }
.dock-title button { width: 12px; height: 12px; margin-left: 1px; border: 1px solid #8f8c8d; border-radius: 2px; }
.dock-title button svg { width: 10px; height: 10px; }
.hatch { flex: 1; height: 6px; background: repeating-linear-gradient(135deg, transparent 0 2px, #fff 2px 3px, #cfcccd 3px 4px); opacity: .7; }
.tree { flex: 202 1 0; min-height: 0; margin-right: 1px; padding-top: 1px; border: 2px solid #c0bdbe; background: #fff; overflow: hidden; }
.tree li { display: flex; height: 19px; align-items: center; }
.eye { display: block; width: 21px; height: 19px; padding: 6px 4px 3px 3px; color: #858384; }
.eye svg { width: 14px; height: 10px; }
.eye.on { color: #14224d; }
.node { display: flex; align-items: center; height: 19px; margin-left: 1px; padding-right: 2px; }
.node.picked { height: 16px; background: #00a287; color: #eafff9; outline: 1px solid #6c8f86; }
.guide { width: 16px; height: 19px; margin-right: 1px; fill: none; stroke: #8c8a8b; overflow: hidden; }
.picked .guide { height: 16px; }
.guide use { stroke: none; }
.cube { width: 15px; height: 15px; margin-right: 1px; }
.splitter { flex: none; display: flex; justify-content: center; height: 7px; padding-top: 1px; }
.splitter .hatch { flex: 0 0 114px; height: 4px; }
.tabs { flex: none; display: flex; align-items: flex-end; height: 17px; border-bottom: 1px solid #bab7b8; }
.tab { height: 15px; width: 78px; border: 1px solid #bab7b8; border-radius: 3px 3px 0 0; background: #dfdcdd; }
.tab.current { width: 82px; height: 18px; margin-bottom: -1px; border-bottom: 0; background: #e9e6e7; }

.scroll { flex: 358 1 0; min-height: 0; display: flex; margin-right: 1px; border: 2px solid #c0bdbe; overflow: hidden; }
.info { flex: 1; min-width: 0; padding: 6px 7px 0 8px; }
fieldset { min-width: 0; margin: 0 0 5px; padding: 0 5px; border: 2px solid #cbc8c9; border-radius: 4px; }
legend { margin-left: 0; padding: 0 3px; line-height: 14px; }
.stats { padding: 5px 7px; }
.stats legend { margin-left: -3px; }
.stats p { display: flex; line-height: 20px; }
.short { width: 52px; }
.long { width: 105px; }
.arrays { padding: 3px 4px; }
.arrays p { padding: 0 2px 4px; line-height: 16px; }
.list { min-height: 77px; border: 2px solid #adaaab; background: #fff; }
table { width: 100%; border-collapse: separate; border-spacing: 0; table-layout: fixed; }
th { font-weight: normal; }
.list th { height: 17px; padding: 0 2px; text-align: left; background: linear-gradient(#f8f7f7, #dedbdc); border-right: 1px solid #9b9899; border-bottom: 1px solid #b7b4b5; line-height: 16px; }
.list td { height: 14px; padding: 0 2px; white-space: nowrap; overflow: hidden; }
.k-name { width: 93px; }
.k-type { width: 69px; }
.k-index { width: 87px; }
.key { display: flex; align-items: center; gap: 5px; color: #1c7a2a; }
.key svg { flex: none; width: 14px; height: 14px; }
.hit { background: #45e5c8; }
.bounds { padding: 2px 3px 1px; }
.bounds p { display: flex; line-height: 18px; }
.bounds span { width: 54px; }
.index { padding: 4px 4px; }

.bar { flex: 0 0 14px; display: flex; flex-direction: column; padding: 0 1px; }
.bar button { flex: none; display: grid; place-items: center; height: 14px; border: 1px solid #a8a5a6; border-radius: 2px; background: #f1eff0; }
.bar button svg { width: 8px; height: 5px; }
.thumb { flex: 292 1 0; display: grid; place-items: center; border: 1px solid #a8a5a6; border-radius: 2px; background: linear-gradient(90deg, #fff, #dfdcdd); }
.thumb i { width: 9px; height: 16px; background: radial-gradient(circle, #bbb8b9 1px, transparent 1px) 0 0 / 3px 3px; }
.trough { flex: 20 1 0; background: #f1eff0; }

.vsplit { flex: 0 0 5px; background: linear-gradient(90deg, transparent 4px, #bab7b8 4px); }
.views { flex: 1; min-width: 0; display: flex; flex-direction: column; }
.view-tabs { flex: none; display: flex; align-items: flex-end; height: 19px; border-bottom: 1px solid #bab7b8; }
.vtab { display: flex; align-items: center; justify-content: center; gap: 3px; height: 15px; border: 1px solid #bab7b8; border-radius: 3px 3px 0 0; }
.vtab svg { width: 10px; height: 10px; }
.vtab.current { width: 99px; height: 18px; margin-bottom: -1px; background: #e9e6e7; border-bottom: 0; }
.vtab.add { width: 30px; background: #dfdcdd; }
.split { flex: 1; min-height: 0; display: flex; padding: 0 4px 2px; }
.render { flex: 250 1 0; min-width: 0; display: flex; flex-direction: column; }
.sheet { flex: 522 1 0; min-width: 0; display: flex; flex-direction: column; }
.vsplit.thin { flex: 0 0 5px; margin: 24px 0 3px; background: radial-gradient(circle, #cbc8c9 1px, transparent 1px) 0 0 / 5px 4px #f1eff0; }
.view-head { flex: none; display: flex; align-items: center; height: 20px; margin-right: -2px; }
.view-head.right { margin-right: -1px; }
.cam { width: 14px; height: 12px; margin: 0 3px 0 1px; }
.mode { font-size: 9px; padding: 0 11px 0 3px; }
.btns { display: flex; gap: 1px; margin-left: auto; }
.right .vname { margin-left: auto; }
.right .btns { margin-left: 11px; }
.btns button { display: grid; place-items: center; width: 19px; height: 18px; border: 1px solid #a8a5a6; border-radius: 3px; background: #f1eff0; }
.btns svg { width: 10px; height: 10px; }
.strong { font-weight: bold; text-decoration: underline; text-underline-offset: 2px; }

.scene { position: relative; flex: 1; margin: 3px 0 2px; overflow: hidden; background: #53566f; color: #f4f4f8; }
.clock { padding: 3px 0 0 3px; font: 23px/26px Lato, sans-serif; white-space: nowrap; }
.point { position: absolute; left: 49%; top: 50%; width: 4px; height: 4px; background: #f01ee8; }
.axes { position: absolute; left: 63px; bottom: 62px; width: 56px; height: 56px; }
.axis-label { font: 13px "DejaVu Sans", sans-serif; }
.legend { position: absolute; right: 0; bottom: 29px; width: 56px; height: 252px; font: 6px Lato, sans-serif; fill: #eceef6; }
.lt { font: 9px Lato, sans-serif; }

.active { flex: 1; min-height: 0; display: flex; flex-direction: column; padding: 1px; border: 2px solid #1414dc; }
.sheet-bar { flex: none; display: flex; align-items: center; height: 23px; white-space: nowrap; }
.sheet-bar label { font-weight: bold; }
.c-show { flex: 0 0 134px; margin: 0 1px 0 4px; }
.c-attr { flex: 0 0 81px; margin: 0 1px 0 2px; }
.c-attr select { padding-right: 0; }
.s-prec { margin: 0 0 0 auto; }
.s-prec input { text-align: right; padding-right: 4px; }
.sq { flex: none; display: grid; place-items: center; width: 21px; height: 21px; margin-left: 2px; border: 1px solid #a8a5a6; border-radius: 3px; background: #f1eff0; }
.sq svg { width: 16px; height: 16px; }
.grid-frame { flex: 1; min-height: 0; display: flex; flex-direction: column; border: 2px solid #35a78c; background: #fff; }
.grid .g-row { width: 13px; }
.grid .g-a { width: 87px; }
.grid .g-u { width: 159px; }
.grid thead { background: #e9e6e7; }
.grid th { height: 19px; padding: 0; border-right: 1px solid #9b9899; border-bottom: 1px solid #b7b4b5; background: linear-gradient(#f8f7f7, #dedbdc); }
.grid thead td { padding: 0; }
.grid tbody th { font-weight: bold; background: #dedbdc; }
.grid tbody td { height: 26px; padding: 0 2px; background: #00a287; color: #eafff9; border-right: 1px solid #7fb5a9; }
.gutter { flex: 1; width: 13px; background: #e9e6e7; }

.status { flex: none; display: flex; justify-content: flex-end; align-items: center; height: 27px; padding: 0 1px 3px; background: linear-gradient(#e9e6e7 20%, #c9c6c7 75%, #8f8d8e); border-top: 1px solid #bab7b8; }
.progress { display: flex; width: 560px; height: 20px; padding: 1px 3px 1px 1px; border: 1px solid #9b9899; background: #dedbdc; }
.progress button { width: 17px; padding: 3px; border: 1px solid #a8a5a6; border-radius: 2px; background: #e9e6e7; }
.meter { flex: 1; border: 1px solid #8f8c8d; border-radius: 2px; background: linear-gradient(#fff, #f1eff0); }
.grip { width: 12px; height: 12px; margin-left: 9px; align-self: flex-end; }
```
